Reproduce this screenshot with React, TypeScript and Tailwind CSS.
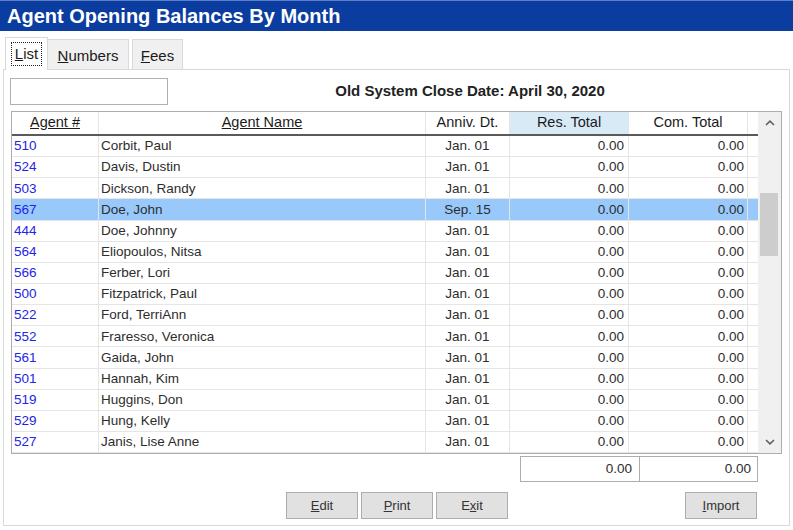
import React from 'react';

type Row = { id: string; name: string; date: string; selected?: boolean };

const rows: Row[] = [
  { id: '510', name: 'Corbit, Paul', date: 'Jan. 01' },
  { id: '524', name: 'Davis, Dustin', date: 'Jan. 01' },
  { id: '503', name: 'Dickson, Randy', date: 'Jan. 01' },
  { id: '567', name: 'Doe, John', date: 'Sep. 15', selected: true },
  { id: '444', name: 'Doe, Johnny', date: 'Jan. 01' },
  { id: '564', name: 'Eliopoulos, Nitsa', date: 'Jan. 01' },
  { id: '566', name: 'Ferber, Lori', date: 'Jan. 01' },
  { id: '500', name: 'Fitzpatrick, Paul', date: 'Jan. 01' },
  { id: '522', name: 'Ford, TerriAnn', date: 'Jan. 01' },
  { id: '552', name: 'Fraresso, Veronica', date: 'Jan. 01' },
  { id: '561', name: 'Gaida, John', date: 'Jan. 01' },
  { id: '501', name: 'Hannah, Kim', date: 'Jan. 01' },
  { id: '519', name: 'Huggins, Don', date: 'Jan. 01' },
  { id: '529', name: 'Hung, Kelly', date: 'Jan. 01' },
  { id: '527', name: 'Janis, Lise Anne', date: 'Jan. 01' },
];

function Chevron({ up }: { up?: boolean }) {
  return (
    <svg width="10" height="6" viewBox="0 0 10 6" className={up ? '' : 'rotate-180'}>
      <path d="M1 5 L5 1.2 L9 5" fill="none" stroke="#606060" strokeWidth="1.6" />
    </svg>
  );
}

function Button({ label, hot, className = '' }: { label: string; hot: number; className?: string }) {
  return (
    <button
      type="button"
      className={`flex h-[27px] w-[72px] items-center justify-center border border-[#adadad] bg-[#e1e1e1] text-[13px] text-[#333] ${className}`}
    >
      {label.slice(0, hot)}
      <span className="underline">{label[hot]}</span>
      {label.slice(hot + 1)}
    </button>
  );
}

export default function App() {
  return (
    <div className="h-[530px] w-[793px] overflow-hidden bg-white font-['Liberation_Sans',Arial,sans-serif] text-[#2d2d2d]">
      <div className="flex h-[31px] items-center border-t border-[#5c7fc8] bg-[#0a3d9f] pl-[7px] text-[20px] leading-none font-bold text-white">
        Agent Opening Balances By Month
      </div>

      <div className="flex h-[38px] items-end pl-[5px] text-[15px] text-[#1a1a1a]">
        <div className="relative z-10 -mb-px flex h-[33px] w-[43px] items-center justify-center border border-b-0 border-[#d9d9d9] bg-white">
          <span className="border border-dotted border-[#222] px-[3px] py-[2px] leading-[18px]">
            <span className="underline">L</span>ist
          </span>
        </div>
        <div className="flex h-[30px] w-[81px] items-center justify-center border border-b-0 border-l-0 border-[#d9d9d9] bg-[#f0f0f0] pt-[3px]">
          <span className="underline">N</span>umbers
        </div>
        <div className="ml-[3px] flex h-[30px] w-[51px] items-center justify-center border border-b-0 border-[#d9d9d9] bg-[#f0f0f0] pt-[3px]">
          <span className="underline">F</span>ees
        </div>
      </div>

      <div className="relative mx-[3px] h-[457px] border border-[#d9d9d9] pt-[8px] pl-[6px]">
        <div className="flex h-[27px] w-[772px] items-center">
          <div className="h-[27px] w-[158px] border border-[#b0b0b0] bg-white" />
          <div className="flex-1 pr-[10px] text-center text-[15px] font-bold text-[#222]">
            Old System Close Date: April 30, 2020
          </div>
        </div>

        <div className="mt-[6px] ml-[1px] flex h-[343px] w-[771px] border border-[#adadad] bg-white">
          <div className="flex w-[746px] flex-col">
            <div className="flex h-[24px] shrink-0 border-b-2 border-[#5a5a5a] text-[14.5px] text-[#1a1a1a]">
              <div className="flex w-[87px] items-center justify-center border-r border-[#e5e5e5] underline">Agent #</div>
              <div className="flex w-[327px] items-center justify-center border-r border-[#e5e5e5] underline">Agent Name</div>
              <div className="flex w-[84px] items-center justify-center border-r border-[#e5e5e5]">Anniv. Dt.</div>
              <div className="flex w-[119px] items-center justify-center border-r border-[#e5e5e5] bg-[#d9eaf7]">Res. Total</div>
              <div className="flex w-[119px] items-center justify-center border-r border-[#e5e5e5]">Com. Total</div>
              <div className="w-[10px]" />
            </div>
            {rows.map((r) => (
              <div
                key={r.id}
                className={`flex flex-1 border-b border-[#e5e5e5] text-[13.5px] leading-none ${r.selected ? 'bg-[#99c9fb]' : ''}`}
              >
                <div className="flex w-[87px] items-center border-r border-[#e5e5e5] pl-[2px] text-[#2424e8]">{r.id}</div>
                <div className="flex w-[327px] items-center border-r border-[#e5e5e5] pl-[2px]">{r.name}</div>
                <div className="flex w-[84px] items-center justify-center border-r border-[#e5e5e5]">{r.date}</div>
                <div className="flex w-[119px] items-center justify-end border-r border-[#e5e5e5] pr-[4px]">0.00</div>
                <div className="flex w-[119px] items-center justify-end border-r border-[#e5e5e5] pr-[3px]">0.00</div>
                <div className="w-[10px]" />
              </div>
            ))}
          </div>

          <div className="flex w-[23px] flex-col bg-[#f0f0f0]">
            <div className="flex h-[22px] items-center justify-center">
              <Chevron up />
            </div>
            <div className="flex-1">
              <div className="mt-[59px] ml-[2px] h-[63px] w-[18px] bg-[#cdcdcd]" />
            </div>
            <div className="flex h-[22px] items-center justify-center">
              <Chevron />
            </div>
          </div>
        </div>

        <div className="mt-[2px] ml-[510px] flex h-[26px] w-[238px] border border-[#adadad] text-[13.5px]">
          <div className="flex w-[119px] items-center justify-end border-r border-[#adadad] pr-[7px]">0.00</div>
          <div className="flex flex-1 items-center justify-end pr-[6px]">0.00</div>
        </div>

        <div className="mt-[10px] flex pl-[276px]">
          <Button label="Edit" hot={0} />
          <Button label="Print" hot={0} className="ml-[3px]" />
          <Button label="Exit" hot={1} className="ml-[3px]" />
          <Button label="Import" hot={0} className="ml-[177px]" />
        </div>
      </div>
    </div>
  );
}
